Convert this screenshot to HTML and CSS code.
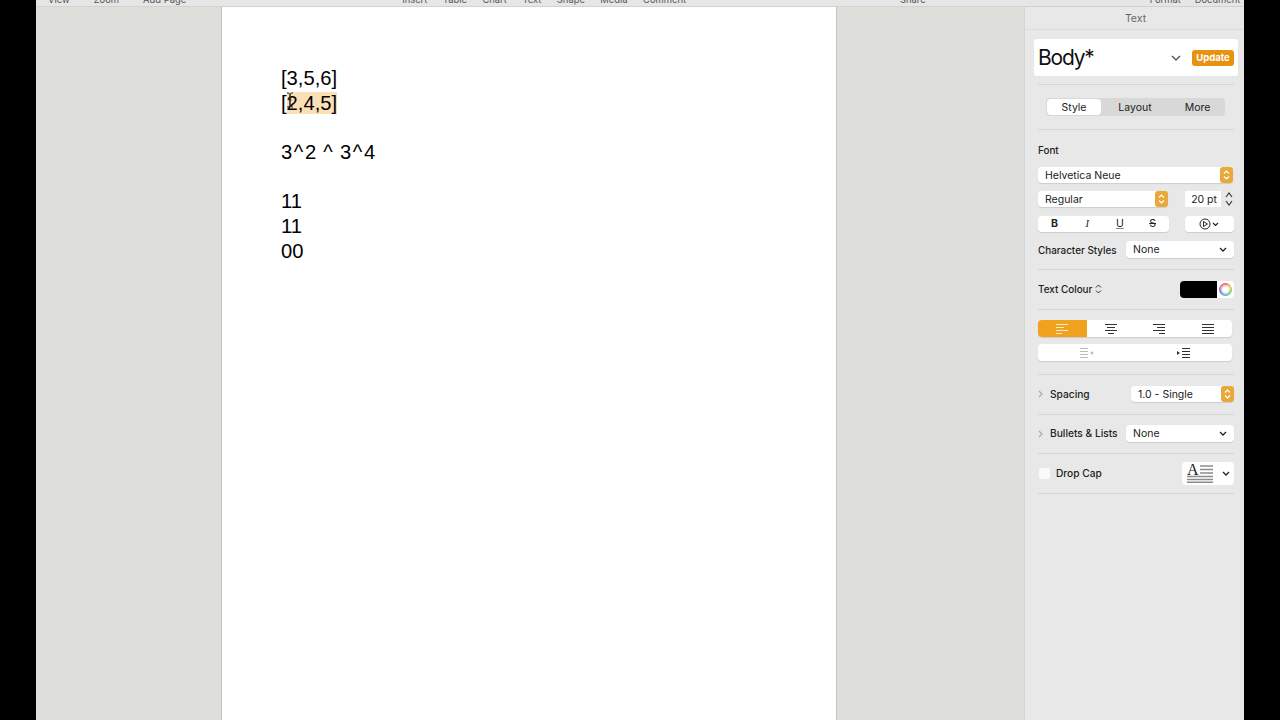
FILE: index.html
```html
<!DOCTYPE html>
<html lang="en">
<head>
    <meta charset="UTF-8">
    <meta name="viewport" content="width=device-width, initial-scale=1.0">
    <title>Pages document</title>
    <link rel="stylesheet" href="styles.css">
</head>
<body>
    <div class="window">
        <div class="toolbar">
            <div class="tool-group view-group">
                <span>View</span><span>Zoom</span><span>Add Page</span>
            </div>
            <div class="tool-group insert-group">
                <span>Insert</span><span>Table</span><span>Chart</span><span>Text</span><span>Shape</span><span>Media</span><span>Comment</span>
            </div>
            <div class="tool-group share-group"><span>Share</span></div>
            <div class="tool-group format-group"><span>Format</span><span>Document</span></div>
        </div>

        <div class="main">
            <div class="canvas">
                <div class="page">
                    <p>[3,5,6]</p>
                    <p>[<span class="selection">2,4,5]</span></p>
                    <p>&nbsp;</p>
                    <p>3<span class="caret">^</span>2 <span class="caret">^</span> 3<span class="caret">^</span>4</p>
                    <p>&nbsp;</p>
                    <p>11</p>
                    <p>11</p>
                    <p>00</p>
                    <svg class="ibeam" width="8" height="16" viewBox="0 0 8 16" fill="none" stroke="#222" stroke-width="1"><path d="M1 1c2 0 3 .5 3 2v10c0 1.500-1 2-3 2M7 1c-2 0-3 .5-3 2v10c0 1.500 1 2 3 2M2.500 8h3"/></svg>
                </div>
            </div>

            <div class="sidebar">
                <div class="sidebar-title">Text</div>

                <div class="style-box">
                    <span class="style-name">Body*</span>
                    <svg class="style-chevron" width="10" height="6" viewBox="0 0 10 6" fill="none" stroke="#555" stroke-width="1.300"><path d="M1 1l4 4 4-4"/></svg>
                    <span class="update">Update</span>
                </div>

                <div class="section tabs-section">
                    <div class="tabs">
                        <span class="tab tab-style active">Style</span>
                        <span class="tab tab-layout">Layout</span>
                        <span class="tab tab-more">More</span>
                    </div>
                </div>

                <div class="section font-section">
                    <div class="label font-label">Font</div>
                    <div class="select select-font">
                        <span>Helvetica Neue</span>
                        <span class="stepper-btn"><svg width="7" height="10" viewBox="0 0 7 10" fill="none" stroke="#fff" stroke-width="1.200"><path d="M1 3.500L3.500 1 6 3.500M1 6.500L3.500 9 6 6.500"/></svg></span>
                    </div>
                    <div class="font-row">
                        <div class="select select-weight">
                            <span>Regular</span>
                            <span class="stepper-btn"><svg width="7" height="10" viewBox="0 0 7 10" fill="none" stroke="#fff" stroke-width="1.200"><path d="M1 3.500L3.500 1 6 3.500M1 6.500L3.500 9 6 6.500"/></svg></span>
                        </div>
                        <div class="size-input">20 pt</div>
                        <svg class="size-stepper" width="8" height="16" viewBox="0 0 8 16" fill="none" stroke="#333" stroke-width="1.100"><path d="M1 6l3-4 3 4M1 10l3 4 3-4"/></svg>
                    </div>
                    <div class="font-row biu-row">
                        <div class="biu">
                            <span class="biu-btn bold">B</span>
                            <span class="biu-btn italic">I</span>
                            <span class="biu-btn underline">U</span>
                            <span class="biu-btn strike">S</span>
                        </div>
                        <div class="gear-btn">
                            <svg width="21" height="12" viewBox="0 0 21 12" fill="none" stroke="#222" stroke-width="1"><circle cx="6" cy="6" r="5"/><path d="M4.500 3.500v5l4-2.500z"/><path d="M14 5l2.500 2.500L19 5" stroke-width="1.200"/></svg>
                        </div>
                    </div>
                    <div class="char-row">
                        <span class="label">Character Styles</span>
                        <div class="select select-none">
                            <span>None</span>
                            <svg width="8" height="5" viewBox="0 0 8 5" fill="none" stroke="#222" stroke-width="1.300"><path d="M1 1l3 3 3-3"/></svg>
                        </div>
                    </div>
                </div>

                <div class="section colour-section">
                    <span class="label raised colour-label">Text Colour
                        <svg width="7" height="10" viewBox="0 0 7 10" fill="none" stroke="#333" stroke-width="1"><path d="M1 3.500L3.500 1 6 3.500M1 6.500L3.500 9 6 6.500"/></svg>
                    </span>
                    <div class="swatch">
                        <span class="swatch-fill"></span>
                        <span class="wheel-btn"><span class="wheel"></span></span>
                    </div>
                </div>

                <div class="section align-section">
                    <div class="btn-row">
                        <span class="align-btn on"><svg width="12" height="10" viewBox="0 0 12 10" stroke="#fdeccb"><path d="M0 .5h12M0 3.500h8M0 6.500h12M0 9.500h6"/></svg></span>
                        <span class="align-btn"><svg width="12" height="10" viewBox="0 0 12 10" stroke="#333"><path d="M0 .5h12M2 3.500h8M0 6.500h12M3 9.500h6"/></svg></span>
                        <span class="align-btn"><svg width="12" height="10" viewBox="0 0 12 10" stroke="#333"><path d="M0 .5h12M4 3.500h8M0 6.500h12M6 9.500h6"/></svg></span>
                        <span class="align-btn"><svg width="12" height="10" viewBox="0 0 12 10" stroke="#333"><path d="M0 .5h12M0 3.500h12M0 6.500h12M0 9.500h12"/></svg></span>
                    </div>
                    <div class="btn-row">
                        <span class="align-btn"><svg width="13" height="10" viewBox="0 0 13 10" stroke="#bbb"><path d="M0 .5h8M0 3.500h8M0 6.500h8M0 9.500h8"/><path d="M13 3v4l-3-2z" fill="#bbb" stroke="none"/></svg></span>
                        <span class="align-btn"><svg width="13" height="10" viewBox="0 0 13 10" stroke="#333"><path d="M5 .5h8M5 3.500h8M5 6.500h8M5 9.500h8"/><path d="M0 3v4l3-2z" fill="#333" stroke="none"/></svg></span>
                    </div>
                </div>

                <div class="section option-section">
                    <svg class="disclosure" width="5" height="8" viewBox="0 0 5 8" fill="none" stroke="#aaa" stroke-width="1.200"><path d="M1 1l3 3-3 3"/></svg>
                    <span class="label strong">Spacing</span>
                    <div class="select select-spacing">
                        <span>1.0 - Single</span>
                        <span class="stepper-btn"><svg width="7" height="10" viewBox="0 0 7 10" fill="none" stroke="#fff" stroke-width="1.200"><path d="M1 3.500L3.500 1 6 3.500M1 6.500L3.500 9 6 6.500"/></svg></span>
                    </div>
                </div>

                <div class="section option-section">
                    <svg class="disclosure" width="5" height="8" viewBox="0 0 5 8" fill="none" stroke="#aaa" stroke-width="1.200"><path d="M1 1l3 3-3 3"/></svg>
                    <span class="label strong raised">Bullets &amp; Lists</span>
                    <div class="select select-none">
                        <span>None</span>
                        <svg width="8" height="5" viewBox="0 0 8 5" fill="none" stroke="#222" stroke-width="1.300"><path d="M1 1l3 3 3-3"/></svg>
                    </div>
                </div>

                <div class="section dropcap-section">
                    <span class="checkbox"></span>
                    <span class="label strong raised">Drop Cap</span>
                    <div class="dropcap-btn">
                        <span class="dropcap-letter">A</span>
                        <svg class="dropcap-lines" width="26" height="18" viewBox="0 0 26 18" stroke="#8c8c8c" stroke-width="1.500"><path d="M13 1h13M13 4.500h13M13 8h13M0 11.500h26M0 14.500h26M0 17.300h26"/></svg>
                        <svg width="8" height="5" viewBox="0 0 8 5" fill="none" stroke="#222" stroke-width="1.300"><path d="M1 1l3 3 3-3"/></svg>
                    </div>
                </div>
            </div>
        </div>
    </div>
</body>
</html>
```

FILE: styles.css
```css
* {
    box-sizing: border-box;
}

html, body {
    margin: 0;
    height: 100%;
    background: #000;
    overflow: hidden;
}

.window {
    margin: 0 36px;
    height: 720px;
    display: flex;
    flex-direction: column;
    font-family: Inter, "Liberation Sans", sans-serif;
    font-size: 10.5px;
    color: #222;
}

/* only the bottom edge of the toolbar is on screen */
.toolbar {
    height: 7px;
    flex: none;
    display: flex;
    align-items: flex-end;
    background: #e6e6e6;
    border-bottom: 1px solid #d2d2d2;
    overflow: hidden;
    color: #555;
    font-size: 9.400px;
    line-height: 12px;
}

.tool-group {
    display: flex;
    flex: none;
}

.view-group {
    gap: 24px;
    margin-left: 12px;
}

.insert-group {
    gap: 15.500px;
    margin-left: 216px;
}

.share-group {
    margin-left: 214px;
}

.format-group {
    gap: 14px;
    margin-left: 224px;
}

.main {
    flex: 1;
    display: flex;
    min-height: 0;
}

.canvas {
    flex: 1;
    background: #dedfdb;
    padding-left: 186px;
}

.page {
    width: 614px;
    height: 100%;
    background: #fff;
    box-shadow: -1px 0 0 #c2c3bf, 1px 0 0 #c2c3bf;
    padding: 59px;
    position: relative;
    font-family: "Liberation Sans", Arial, sans-serif;
    font-size: 20.200px;
    line-height: 24.650px;
    color: #000;
}

.page p {
    margin: 0;
}

.selection {
    background: #fbdfb6;
}

/* Helvetica's caret is wider than Liberation's */
.caret {
    margin: 0 1.600px;
}

.ibeam {
    position: absolute;
    left: 64px;
    top: 85px;
}

.sidebar {
    width: 220px;
    flex: none;
    background: #e8e8e8;
    border-left: 1px solid #d4d4d4;
    padding-right: 10px;
}

.sidebar-title {
    height: 23px;
    margin-right: -10px;
    border-bottom: 1px solid #dcdcdc;
    text-align: center;
    line-height: 23px;
    padding-left: 2px;
    color: #666;
}

.style-box {
    height: 37px;
    margin: 9px -4px 0 9px;
    padding: 0 4px;
    display: flex;
    align-items: center;
    background: #fff;
    border-radius: 3px;
}

.style-name {
    flex: 1;
    font-size: 21px;
    letter-spacing: -1.200px;
    color: #111;
}

.style-chevron {
    margin-right: 11px;
}

.update {
    width: 42px;
    height: 16px;
    border-radius: 3px;
    background: #e8930f;
    color: #fff;
    font-size: 9.500px;
    font-weight: 700;
    line-height: 16px;
    text-align: center;
}

.section {
    margin-left: 13px;
    border-top: 1px solid #d6d6d6;
}

.tabs-section {
    margin-top: 8px;
    height: 45px;
    padding: 13px 9px 0 8px;
}

.tabs {
    height: 18px;
    display: flex;
    align-items: center;
    background: #d8d8d8;
    border-radius: 4px;
    padding: 0 1px;
    color: #222;
}

.tab {
    text-align: center;
    line-height: 17px;
    height: 16px;
}

.tab-style {
    width: 54px;
}

.tab-layout {
    width: 68px;
}

.tab-more {
    flex: 1;
    padding-left: 2px;
}

.tab.active {
    background: #fff;
    border-radius: 4px;
}

.label {
    font-size: 9.900px;
    font-weight: 500;
    color: #222;
}

.label.strong {
    font-size: 10.200px;
}

.label.raised {
    padding-bottom: 2px;
}

.font-section {
    height: 140px;
    padding-top: 14px;
}

.font-label {
    line-height: 13px;
    margin-bottom: 10px;
}

.select {
    height: 16px;
    display: flex;
    align-items: center;
    justify-content: space-between;
    background: #fff;
    border-radius: 4px;
    padding-left: 7px;
    box-shadow: 0 1px 1px rgba(0, 0, 0, .12);
}

.select-font {
    width: 195px;
}

.stepper-btn {
    width: 13px;
    height: 16px;
    display: flex;
    align-items: center;
    justify-content: center;
    background: #e9a93a;
    border-radius: 3px;
}

.font-row {
    display: flex;
    align-items: center;
    margin-top: 8px;
}

.font-row.biu-row {
    margin-top: 9px;
}

.select-weight {
    width: 130px;
}

.size-input {
    width: 36px;
    height: 16px;
    margin-left: 17px;
    background: #fff;
    line-height: 17px;
    text-align: right;
    padding-right: 4px;
}

.size-stepper {
    margin-left: 4px;
}

.biu {
    width: 131px;
    height: 16px;
    display: flex;
    background: #fff;
    border-radius: 4px;
    box-shadow: 0 1px 1px rgba(0, 0, 0, .12);
}

.biu-btn {
    flex: 1;
    text-align: center;
    line-height: 16px;
}

.bold {
    font-weight: 700;
}

.italic {
    font-family: "Liberation Serif", serif;
    font-style: italic;
}

.underline {
    text-decoration: underline;
    text-decoration-color: #888;
}

.strike {
    text-decoration: line-through;
}

.gear-btn {
    width: 49px;
    height: 16px;
    margin-left: 16px;
    display: flex;
    align-items: center;
    justify-content: center;
    background: #fff;
    border-radius: 4px;
    box-shadow: 0 1px 1px rgba(0, 0, 0, .12);
}

.char-row {
    display: flex;
    align-items: center;
    justify-content: space-between;
    margin-top: 9px;
}

.select-none {
    width: 108px;
    height: 17px;
    padding-right: 7px;
}

.colour-section {
    height: 40px;
    display: flex;
    align-items: center;
    justify-content: space-between;
}

.colour-label svg {
    vertical-align: -1px;
}

.swatch {
    width: 54px;
    height: 17px;
    display: flex;
    background: #fff;
    border-radius: 4px;
    overflow: hidden;
}

.swatch-fill {
    width: 37px;
    background: #000;
}

.wheel-btn {
    flex: 1;
    display: flex;
    align-items: center;
    justify-content: center;
}

.wheel {
    width: 13px;
    height: 13px;
    border-radius: 50%;
    background: radial-gradient(#fff 30%, transparent 65%), conic-gradient(#e9604c, #e8c53f, #6fc65a, #4fb6d8, #7a66d0, #d85fa8, #e9604c);
}

.align-section {
    height: 65px;
    padding-top: 10px;
}

.btn-row {
    width: 194px;
    height: 17px;
    display: flex;
    background: #fff;
    border-radius: 4px;
    box-shadow: 0 1px 1px rgba(0, 0, 0, .12);
    overflow: hidden;
    margin-bottom: 7px;
}

.align-btn {
    flex: 1;
    display: flex;
    align-items: center;
    justify-content: center;
}

.align-btn.on {
    background: #f0a21e;
}

.option-section {
    height: 39.500px;
    display: flex;
    align-items: center;
}

.disclosure {
    margin-right: 7px;
}

.option-section .select {
    margin-left: auto;
}

.select-spacing {
    width: 103px;
}

.dropcap-section {
    height: 41px;
    display: flex;
    align-items: center;
    border-bottom: 1px solid #d6d6d6;
}

.checkbox {
    width: 11px;
    height: 11px;
    margin: 0 6px 0 1px;
    background: #fafafa;
    border-radius: 2px;
}

.dropcap-btn {
    width: 52px;
    height: 23px;
    margin-left: auto;
    padding: 0 4px 0 5px;
    display: flex;
    align-items: center;
    justify-content: space-between;
    background: #fff;
    border-radius: 4px;
    position: relative;
}

.dropcap-letter {
    position: absolute;
    left: 5px;
    top: 0;
    font-family: "Liberation Serif", serif;
    font-size: 16px;
    line-height: 15px;
    color: #222;
}
```
